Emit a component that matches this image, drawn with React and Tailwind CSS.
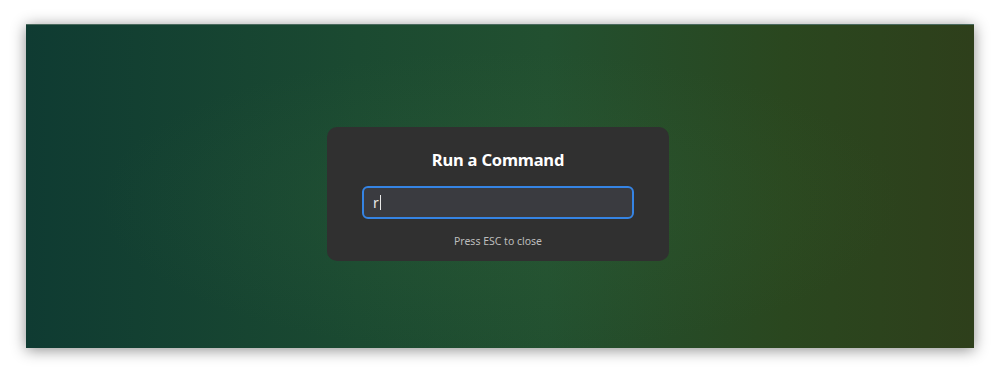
export default function App() {
  return (
    <div className="w-[1000px] h-[376px] bg-white pt-[24px] pl-[26px]" style={{ fontFamily: '"Noto Sans", "Open Sans", sans-serif' }}>
      <div className="relative w-[948px] h-[324px] overflow-hidden shadow-[0_2px_14px_rgba(0,0,0,0.45)] bg-[linear-gradient(90deg,#0f3b32_0%,#1b4a31_35%,#225030_55%,#2a471f_80%,#2e3f1b_100%)]">
        <div className="absolute inset-0 bg-[radial-gradient(ellipse_at_50%_55%,rgba(60,110,60,0.2),rgba(0,0,0,0)_60%)]" />
        <div className="absolute inset-x-0 top-0 h-px bg-[#4a6a5e]" />
        <div className="relative flex h-full items-start justify-center pt-[103px] pr-[4px]">
          <div className="w-[342px] h-[134px] rounded-[10px] bg-[#303030] flex flex-col items-center pt-[21px]">
            <div className="text-[16.5px] font-bold leading-[24px] text-white tracking-[-0.2px]">Run a Command</div>
            <div className="mt-[14px] w-[272px] h-[33px] rounded-[6px] border-2 border-[#3584e4] bg-[#3a3b40] flex items-center pl-[9px]">
              <span className="text-[14px] text-[#e8e8e8] leading-none">r</span>
              <span className="ml-[1px] w-px h-[15px] bg-[#e8e8e8]" />
            </div>
            <div className="mt-[14px] text-[10.5px] leading-[16px] text-[#bdbdbd]">Press ESC to close</div>
          </div>
        </div>
      </div>
    </div>
  );
}
